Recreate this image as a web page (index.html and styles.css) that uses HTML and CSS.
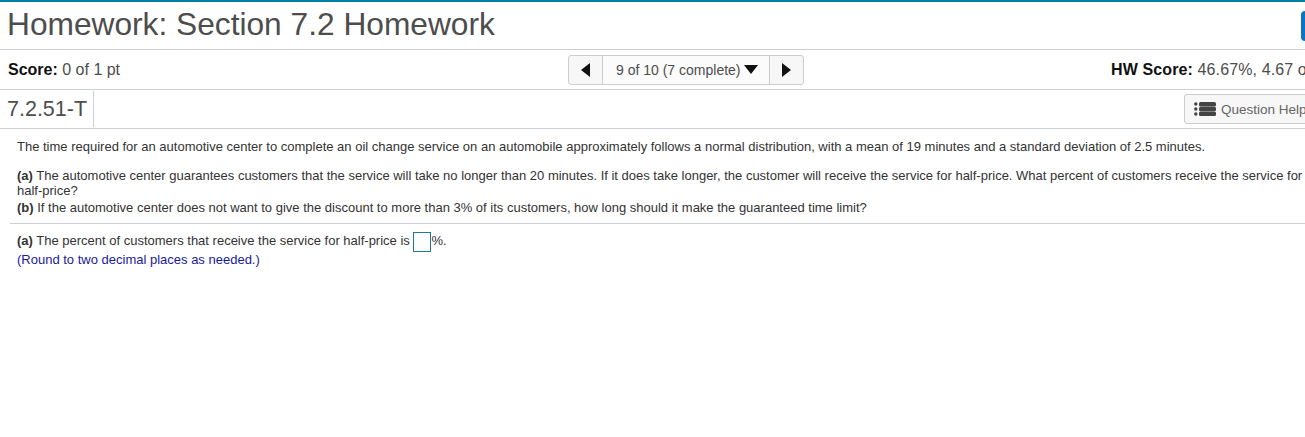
FILE: index.html
```html
<!DOCTYPE html>
<html lang="en">
<head>
    <meta charset="UTF-8">
    <title>Homework: Section 7.2 Homework</title>
    <link rel="stylesheet" href="styles.css">
</head>
<body>
    <div class="page">
        <div class="title-row">
            <h1>Homework: Section 7.2 Homework</h1>
            <button class="blue-btn"></button>
        </div>
        <div class="score-row">
            <div class="score"><b>Score:</b> 0 of 1 pt</div>
            <div class="pager">
                <div class="pager-btn"><span class="arrow-left"></span></div>
                <div class="pager-mid">9 of 10 (7 complete)<span class="arrow-down"></span></div>
                <div class="pager-btn"><span class="arrow-right"></span></div>
            </div>
            <div class="hw-score"><b>HW Score:</b> 46.67%, 4.67 of 10 pts</div>
        </div>
        <div class="question-row">
            <div class="question-id">7.2.51-T</div>
            <button class="help-btn">
                <svg width="22" height="14" viewBox="0 0 22 14">
                    <circle cx="1.8" cy="2" r="1.7"/>
                    <circle cx="1.8" cy="7" r="1.7"/>
                    <circle cx="1.8" cy="12" r="1.7"/>
                    <rect x="5" y="0" width="17" height="4.4" rx="1.5"/>
                    <rect x="5" y="4.8" width="17" height="4.4" rx="1.5"/>
                    <rect x="5" y="9.6" width="17" height="4.4" rx="1.5"/>
                </svg>
                Question Help
            </button>
        </div>
        <div class="question">
            <p class="intro">The time required for an automotive center to complete an oil change service on an automobile approximately follows a normal distribution, with a mean of 19 minutes and a standard deviation of 2.5 minutes.</p>
            <p class="parts"><b>(a)</b> The automotive center guarantees customers that the service will take no longer than 20 minutes. If it does take longer, the customer will receive the service for half-price. What percent of customers receive the service for<br>half-price?</p>
            <p class="parts"><b>(b)</b> If the automotive center does not want to give the discount to more than 3% of its customers, how long should it make the guaranteed time limit?</p>
        </div>
        <div class="answer">
            <p class="answer-line"><b>(a)</b> The percent of customers that receive the service for half-price is <span class="answer-box"></span>%.</p>
            <p class="hint">(Round to two decimal places as needed.)</p>
        </div>
    </div>
</body>
</html>
```

FILE: styles.css
```css
body, html {
    margin: 0;
    padding: 0;
    height: 100%;
    overflow: hidden;
    background: #fff;
    font-family: "Liberation Sans", Arial, sans-serif;
}

/* the page is wider than the window, the right side gets cut off */
.page {
    width: 1364px;
    border-top: 2px solid #007fa3;
}

.title-row {
    height: 47px;
    display: flex;
    justify-content: space-between;
    align-items: center;
    border-bottom: 1px solid #ccd0dc;
    padding: 0 3px 0 7px;
}

h1 {
    margin: 0 0 2px;
    font-size: 31.7px;
    font-weight: normal;
    color: #4d4d4d;
}

.blue-btn {
    width: 60px;
    height: 30px;
    border: none;
    padding: 0;
    background: #0a75c2;
    border-radius: 4px;
}

.score-row {
    height: 39px;
    display: grid;
    grid-template-columns: 1fr auto 1fr;
    align-items: center;
    border-bottom: 1px solid #ccd0dc;
    padding-left: 8px;
    font-size: 16px;
    color: #4d4d4d;
    white-space: nowrap;
}

.score-row b {
    color: #111;
}

.hw-score {
    padding-left: 307px;
    letter-spacing: 0.12px;
}

.pager {
    display: flex;
    height: 28px;
    border: 1px solid #ccc;
    border-radius: 3px;
    background: #f7f7f7;
    font-size: 14px;
}

.pager-btn {
    width: 33px;
    display: flex;
    align-items: center;
    justify-content: center;
}

.pager-mid {
    display: flex;
    align-items: center;
    width: 140px;
    padding: 0 13px;
    background: #fbfbfb;
    border-left: 1px solid #ccc;
    border-right: 1px solid #ccc;
}

.arrow-left, .arrow-right {
    border-top: 7px solid transparent;
    border-bottom: 7px solid transparent;
}

.arrow-left {
    border-right: 9px solid #111;
}

.arrow-right {
    border-left: 9px solid #111;
}

.arrow-down {
    flex: none;
    margin-left: 3px;
    border-left: 7px solid transparent;
    border-right: 7px solid transparent;
    border-top: 9px solid #111;
}

.question-row {
    height: 38px;
    display: flex;
    justify-content: space-between;
    border-bottom: 1px solid #ccd0dc;
    padding-left: 7px;
}

.question-id {
    margin-top: 1px;
    height: 36px;
    width: 86px;
    font-size: 21.5px;
    line-height: 37px;
    color: #4d4d4d;
    border-right: 1px solid #ccd0dc;
}

.help-btn {
    margin-top: 4px;
    width: 180px;
    height: 30px;
    padding: 0 0 0 9px;
    display: flex;
    align-items: center;
    gap: 5px;
    white-space: nowrap;
    background: #f7f7f7;
    border: 1px solid #ccc;
    border-radius: 3px;
    font-family: inherit;
    font-size: 13.5px;
    color: #666;
}

.help-btn svg {
    flex: none;
    fill: #444;
}

.question {
    padding: 10px 0 0 17px;
    font-size: 13px;
    line-height: 15px;
    color: #333;
    white-space: nowrap;
}

p {
    margin: 0;
}

.intro {
    margin-bottom: 14px;
}

.parts {
    margin-bottom: 2px;
}

.answer {
    margin: 8px 0 0 10px;
    padding: 8px 0 0 7px;
    border-top: 1px solid #ccd0dc;
    font-size: 13px;
    color: #333;
}

.answer-box {
    display: inline-block;
    width: 16px;
    height: 18px;
    border: 1px solid #1b7a9c;
    vertical-align: middle;
}

.hint {
    color: #1a1a9c;
}
```
